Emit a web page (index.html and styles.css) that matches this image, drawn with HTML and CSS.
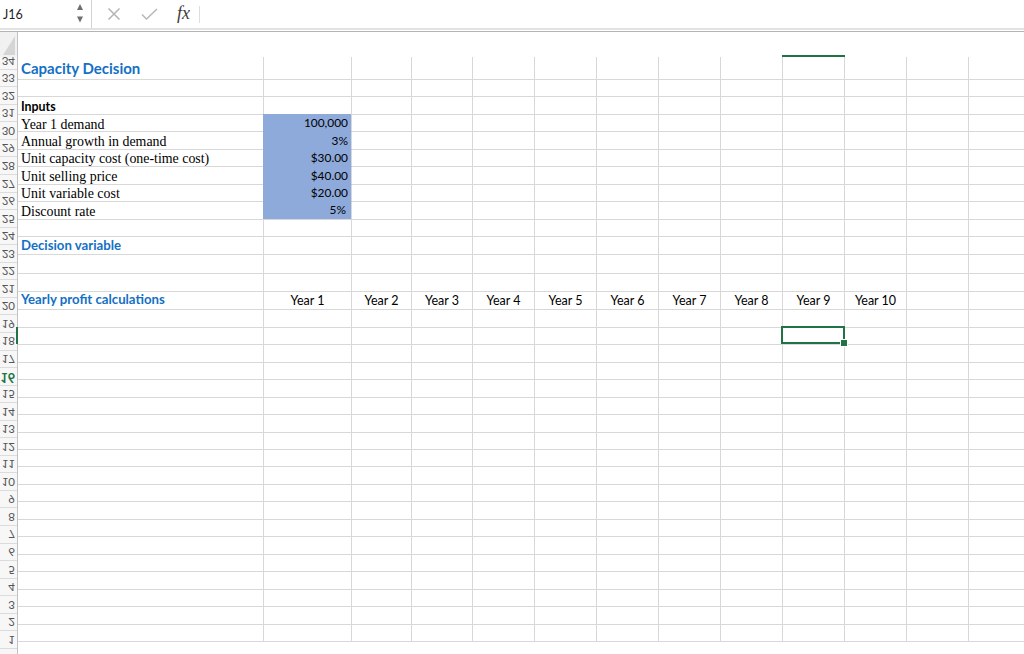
FILE: index.html
```html
<!DOCTYPE html>
<html>
<head>
<meta charset="utf-8">
<link rel="stylesheet" href="styles.css">
</head>
<body>
<div class="formula-bar">
  <div class="name-box">J16</div>
  <svg class="spinner" width="8" height="28" viewBox="0 0 8 28"><polygon points="1,10 7,10 4,4" fill="#6f6f6f"/><polygon points="1,16.5 7,16.5 4,22.5" fill="#6f6f6f"/></svg>
  <div class="fb-sep"></div>
  <svg class="fb-icon cancel" width="14" height="14" viewBox="0 0 14 14"><path d="M1.5 1.5 L12.5 12.5 M12.5 1.5 L1.5 12.5" stroke="#b4b4b4" stroke-width="1.5" fill="none"/></svg>
  <svg class="fb-icon enter" width="17" height="12" viewBox="0 0 17 12"><path d="M1 6.5 L5.5 11 L16 1" stroke="#b8b8b8" stroke-width="1.5" fill="none"/></svg>
  <span class="fx">fx</span>
  <div class="fx-sep"></div>
</div>
<div class="rule"></div>
<div class="sheet">
  <div class="row-headers">
    <div class="corner"><svg width="17" height="25" viewBox="0 0 17 25"><polygon points="15,4 15,23 3,23" fill="#d5d5d5"/></svg></div>
    <div class="labels">
      <div class="label"><span>34</span></div>
      <div class="label"><span>33</span></div>
      <div class="label"><span>32</span></div>
      <div class="label"><span>31</span></div>
      <div class="label"><span>30</span></div>
      <div class="label"><span>29</span></div>
      <div class="label"><span>28</span></div>
      <div class="label"><span>27</span></div>
      <div class="label"><span>26</span></div>
      <div class="label"><span>25</span></div>
      <div class="label"><span>24</span></div>
      <div class="label"><span>23</span></div>
      <div class="label"><span>22</span></div>
      <div class="label"><span>21</span></div>
      <div class="label"><span>20</span></div>
      <div class="label"><span>19</span></div>
      <div class="label"><span>18</span></div>
      <div class="label"><span>17</span></div>
      <div class="label current"><span>16</span></div>
      <div class="label"><span>15</span></div>
      <div class="label"><span>14</span></div>
      <div class="label"><span>13</span></div>
      <div class="label"><span>12</span></div>
      <div class="label"><span>11</span></div>
      <div class="label"><span>10</span></div>
      <div class="label"><span>9</span></div>
      <div class="label"><span>8</span></div>
      <div class="label"><span>7</span></div>
      <div class="label"><span>6</span></div>
      <div class="label"><span>5</span></div>
      <div class="label"><span>4</span></div>
      <div class="label"><span>3</span></div>
      <div class="label"><span>2</span></div>
      <div class="label"><span>1</span></div>
    </div>
  </div>
  <div class="main">
    <div class="col-heads"><span></span><span></span><span></span><span></span><span></span><span></span><span></span><span></span><span></span><span class="active"></span><span></span><span></span><span></span></div>
    <div class="grid">
      <div class="row first"><span class="a title">Capacity Decision</span><span></span><span></span><span></span><span></span><span></span><span></span><span></span><span></span><span></span><span></span><span></span><span></span></div>
      <div class="row"><span></span><span></span><span></span><span></span><span></span><span></span><span></span><span></span><span></span><span></span><span></span><span></span><span></span></div>
      <div class="row"><span class="a head">Inputs</span><span></span><span></span><span></span><span></span><span></span><span></span><span></span><span></span><span></span><span></span><span></span><span></span></div>
      <div class="row"><span class="a serif">Year 1 demand</span><span class="num fill">100,000</span><span></span><span></span><span></span><span></span><span></span><span></span><span></span><span></span><span></span><span></span><span></span></div>
      <div class="row"><span class="a serif">Annual growth in demand</span><span class="num fill">3%</span><span></span><span></span><span></span><span></span><span></span><span></span><span></span><span></span><span></span><span></span><span></span></div>
      <div class="row"><span class="a serif">Unit capacity cost (one-time cost)</span><span class="num fill">$30.00</span><span></span><span></span><span></span><span></span><span></span><span></span><span></span><span></span><span></span><span></span><span></span></div>
      <div class="row"><span class="a serif">Unit selling price</span><span class="num fill">$40.00</span><span></span><span></span><span></span><span></span><span></span><span></span><span></span><span></span><span></span><span></span><span></span></div>
      <div class="row"><span class="a serif">Unit variable cost</span><span class="num fill">$20.00</span><span></span><span></span><span></span><span></span><span></span><span></span><span></span><span></span><span></span><span></span><span></span></div>
      <div class="row"><span class="a serif">Discount rate</span><span class="num fill last pct">5%</span><span></span><span></span><span></span><span></span><span></span><span></span><span></span><span></span><span></span><span></span><span></span></div>
      <div class="row"><span></span><span></span><span></span><span></span><span></span><span></span><span></span><span></span><span></span><span></span><span></span><span></span><span></span></div>
      <div class="row tall"><span class="a section">Decision variable</span><span></span><span></span><span></span><span></span><span></span><span></span><span></span><span></span><span></span><span></span><span></span><span></span></div>
      <div class="row tall"><span></span><span></span><span></span><span></span><span></span><span></span><span></span><span></span><span></span><span></span><span></span><span></span><span></span></div>
      <div class="row tall"><span></span><span></span><span></span><span></span><span></span><span></span><span></span><span></span><span></span><span></span><span></span><span></span><span></span></div>
      <div class="row tall"><span class="a section">Yearly profit calculations</span><span class="yr">Year 1</span><span class="yr">Year 2</span><span class="yr">Year 3</span><span class="yr">Year 4</span><span class="yr">Year 5</span><span class="yr">Year 6</span><span class="yr">Year 7</span><span class="yr">Year 8</span><span class="yr">Year 9</span><span class="yr">Year 10</span><span></span><span></span></div>
      <div class="row"><span></span><span></span><span></span><span></span><span></span><span></span><span></span><span></span><span></span><span></span><span></span><span></span><span></span></div>
      <div class="row current"><span></span><span></span><span></span><span></span><span></span><span></span><span></span><span></span><span></span><span class="selected"></span><span></span><span></span><span></span></div>
      <div class="row"><span></span><span></span><span></span><span></span><span></span><span></span><span></span><span></span><span></span><span></span><span></span><span></span><span></span></div>
      <div class="row"><span></span><span></span><span></span><span></span><span></span><span></span><span></span><span></span><span></span><span></span><span></span><span></span><span></span></div>
      <div class="row"><span></span><span></span><span></span><span></span><span></span><span></span><span></span><span></span><span></span><span></span><span></span><span></span><span></span></div>
      <div class="row"><span></span><span></span><span></span><span></span><span></span><span></span><span></span><span></span><span></span><span></span><span></span><span></span><span></span></div>
      <div class="row"><span></span><span></span><span></span><span></span><span></span><span></span><span></span><span></span><span></span><span></span><span></span><span></span><span></span></div>
      <div class="row"><span></span><span></span><span></span><span></span><span></span><span></span><span></span><span></span><span></span><span></span><span></span><span></span><span></span></div>
      <div class="row"><span></span><span></span><span></span><span></span><span></span><span></span><span></span><span></span><span></span><span></span><span></span><span></span><span></span></div>
      <div class="row"><span></span><span></span><span></span><span></span><span></span><span></span><span></span><span></span><span></span><span></span><span></span><span></span><span></span></div>
      <div class="row"><span></span><span></span><span></span><span></span><span></span><span></span><span></span><span></span><span></span><span></span><span></span><span></span><span></span></div>
      <div class="row"><span></span><span></span><span></span><span></span><span></span><span></span><span></span><span></span><span></span><span></span><span></span><span></span><span></span></div>
      <div class="row"><span></span><span></span><span></span><span></span><span></span><span></span><span></span><span></span><span></span><span></span><span></span><span></span><span></span></div>
      <div class="row"><span></span><span></span><span></span><span></span><span></span><span></span><span></span><span></span><span></span><span></span><span></span><span></span><span></span></div>
      <div class="row"><span></span><span></span><span></span><span></span><span></span><span></span><span></span><span></span><span></span><span></span><span></span><span></span><span></span></div>
      <div class="row"><span></span><span></span><span></span><span></span><span></span><span></span><span></span><span></span><span></span><span></span><span></span><span></span><span></span></div>
      <div class="row"><span></span><span></span><span></span><span></span><span></span><span></span><span></span><span></span><span></span><span></span><span></span><span></span><span></span></div>
      <div class="row"><span></span><span></span><span></span><span></span><span></span><span></span><span></span><span></span><span></span><span></span><span></span><span></span><span></span></div>
      <div class="row"><span></span><span></span><span></span><span></span><span></span><span></span><span></span><span></span><span></span><span></span><span></span><span></span><span></span></div>
    </div>
  </div>
</div>
</body>
</html>
```

FILE: styles.css
```css
* { box-sizing: border-box; }
html, body { margin: 0; padding: 0; }
body {
  width: 1024px;
  height: 654px;
  overflow: hidden;
  background: #fff;
  font-family: Lato, "Liberation Sans", sans-serif;
  color: #000;
}

/* formula bar */
.formula-bar {
  height: 30px;
  display: flex;
  align-items: center;
  border-bottom: 2px solid #e2e2e2;
}
.name-box {
  width: 76px;
  padding-left: 3px;
  font-size: 12.5px;
  color: #1e1e1e;
}
.spinner { display: block; margin-right: 7px; }
.fb-sep {
  width: 1px;
  height: 28px;
  align-self: flex-start;
  background: #d2d2d2;
}
.fb-icon { display: block; }
.cancel { margin-left: 15px; }
.enter { margin-left: 20px; }
.fx {
  margin-left: 19px;
  font-family: "Liberation Serif", serif;
  font-style: italic;
  font-size: 18px;
  color: #3c3c3c;
  line-height: 1;
  padding-bottom: 2px;
}
.fx-sep {
  width: 1px;
  height: 17px;
  margin-left: 9px;
  background: #dedede;
}
.rule {
  height: 1px;
  margin-top: 1px;
  background: #b3b3b3;
}

/* sheet */
.sheet { display: flex; }
.row-headers {
  width: 18px;
  flex: none;
  height: 622px;
  overflow: hidden;
  background: #f7f7f7;
  border-right: 1px solid #c2c2c2;
}
.corner {
  position: relative;
  z-index: 1;
  height: 25px;
  background: #f1f1f1;
}
.corner svg { display: block; }
.labels { margin-top: -4.8px; }
.label {
  height: 17.55px;
  border-bottom: 1px solid #dcdcdc;
  display: flex;
  align-items: center;
  justify-content: flex-end;
  padding-right: 2px;
  font-size: 11.5px;
  color: #555;
  line-height: 1;
}
.label span { display: block; transform: scaleY(-1); }
.label.current { color: #217346; font-weight: 700; font-size: 12.5px; }

.main { flex: 1; min-width: 0; }
.col-heads, .row {
  display: grid;
  grid-template-columns: 246px 88px 60px 61px 62px 62px 62px 62px 62px 62px 62px 62px 62px;
}
.col-heads { height: 25px; }
.col-heads .active { border-bottom: 2px solid #217346; margin-left: -1px; }

.row { height: 17.47px; }
.row.first { height: 23px; }
.row.tall { height: 18.25px; }
.row > span {
  display: flex;
  align-items: flex-end;
  border-right: 1px solid #d8d8d8;
  border-bottom: 1px solid #d8d8d8;
  padding-bottom: 1px;
  font-size: 12.2px;
  line-height: 1.2;
  white-space: nowrap;
  position: relative;
}
.row.current > span:first-child::before {
  content: "";
  position: absolute;
  left: -2px;
  top: -1px;
  bottom: 0;
  width: 2px;
  background: #217346;
  z-index: 2;
}
.a { padding-left: 3px; overflow: visible; }
.title {
  color: #1470c4;
  font-weight: 700;
  font-size: 15px !important;
  padding-bottom: 2px !important;
}
.head { font-weight: 700; font-size: 12.4px !important; padding-bottom: 0 !important; line-height: 1.1 !important; }
.section { color: #1470c4; font-weight: 700; font-size: 13.2px !important; }
.serif {
  font-family: "Liberation Serif", serif;
  font-size: 13.9px !important;
  padding-bottom: 0 !important;
  line-height: 1 !important;
}
.num { justify-content: flex-end; padding-right: 3px; font-size: 11.9px !important; }
.num.pct { padding-right: 5px; }
.fill {
  background: #8eaadb;
  border-bottom-color: #8eaadb !important;
  box-shadow: -1px -1px 0 #8eaadb;
}
.fill.last { border-bottom-color: #d8d8d8 !important; }
.yr { justify-content: center; font-size: 12.5px !important; }
.selected::before {
  content: "";
  position: absolute;
  left: -2px;
  top: -2px;
  right: -1px;
  bottom: 0;
  border: 2px solid #217346;
  z-index: 2;
}
.selected::after {
  content: "";
  position: absolute;
  right: -4px;
  bottom: -3px;
  width: 6px;
  height: 6px;
  background: #217346;
  border: 1px solid #fff;
  z-index: 3;
}
```
